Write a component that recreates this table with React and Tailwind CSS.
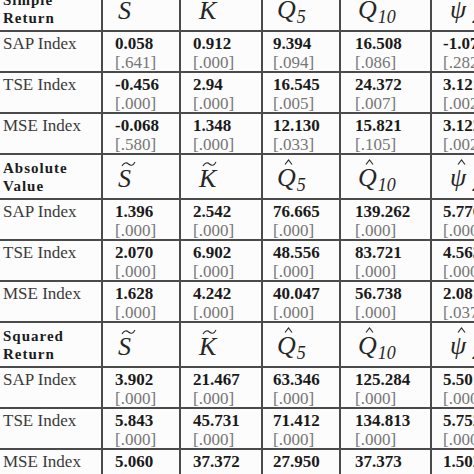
const SECTIONS = [
  {
    title: ['Simple', 'Return'],
    accents: [null, null, null, null, null],
    rows: [
      ['SAP Index', ['0.058', '.641'], ['0.912', '.000'], ['9.394', '.094'], ['16.508', '.086'], ['-1.074', '.282']],
      ['TSE Index', ['-0.456', '.000'], ['2.94', '.000'], ['16.545', '.005'], ['24.372', '.007'], ['3.121', '.002']],
      ['MSE Index', ['-0.068', '.580'], ['1.348', '.000'], ['12.130', '.033'], ['15.821', '.105'], ['3.122', '.002']],
    ],
  },
  {
    title: ['Absolute', 'Value'],
    accents: ['tilde', 'tilde', 'hat', 'hat', 'hat'],
    rows: [
      ['SAP Index', ['1.396', '.000'], ['2.542', '.000'], ['76.665', '.000'], ['139.262', '.000'], ['5.770', '.000']],
      ['TSE Index', ['2.070', '.000'], ['6.902', '.000'], ['48.556', '.000'], ['83.721', '.000'], ['4.563', '.000']],
      ['MSE Index', ['1.628', '.000'], ['4.242', '.000'], ['40.047', '.000'], ['56.738', '.000'], ['2.081', '.037']],
    ],
  },
  {
    title: ['Squared', 'Return'],
    accents: ['tilde', 'tilde', 'hat', 'hat', 'hat'],
    rows: [
      ['SAP Index', ['3.902', '.000'], ['21.467', '.000'], ['63.346', '.000'], ['125.284', '.000'], ['5.501', '.000']],
      ['TSE Index', ['5.843', '.000'], ['45.731', '.000'], ['71.412', '.000'], ['134.813', '.000'], ['5.752', '.000']],
      ['MSE Index', ['5.060', '.000'], ['37.372', '.000'], ['27.950', '.000'], ['37.373', '.000'], ['1.502', '.000']],
    ],
  },
];

const SYMBOLS = [
  { base: 'S' },
  { base: 'K' },
  { base: 'Q', sub: '5' },
  { base: 'Q', sub: '10' },
  { base: 'ψ', sub: '2', gap: true },
];

const NUM_PAD = ['pl-[12px]', 'pl-[12px]', 'pl-[10px]', 'pl-[14px]', 'pl-[11px]'];
const SYM_PAD = ['pl-[15px]', 'pl-[18px]', 'pl-[14px]', 'pl-[17px]', 'pl-[18px]'];

function Accent({ kind }) {
  if (kind === 'tilde') {
    return (
      <svg className="absolute top-[-3px] left-[3px] w-[15px] h-[6px]" viewBox="0 0 15 6" fill="none">
        <path d="M1 5 C3 1.5 5.5 1 7.5 3 S12 5 14 1" stroke="#2f2f2f" strokeWidth="1.1" />
      </svg>
    );
  }
  return (
    <svg className="absolute top-[-4px] left-[7px] w-[9px] h-[6px]" viewBox="0 0 9 6" fill="none">
      <path d="M1 5.5 L4.5 1 L8 5.5" stroke="#2f2f2f" strokeWidth="1.2" />
    </svg>
  );
}

function Symbol({ base, sub, gap, accent }) {
  return (
    <span className="inline-flex items-baseline italic text-[#262626] leading-[30px]">
      <span className="relative inline-block text-[26px]">
        {base}
        {accent && <Accent kind={accent} />}
      </span>
      {sub && (
        <span className={`text-[18px] relative top-[5px] ${gap ? 'ml-[6px]' : 'ml-[1px]'}`}>{sub}</span>
      )}
    </span>
  );
}

function HeaderRow({ title, accents }) {
  return (
    <>
      <div className="bg-[#fcfcfc] flex flex-col justify-center pl-[3px] text-[15px] leading-[18px] font-bold tracking-[1px] text-[#1c1c1c]">
        <span>{title[0]}</span>
        <span>{title[1]}</span>
      </div>
      {SYMBOLS.map((s, i) => (
        <div key={i} className={`bg-[#fcfcfc] flex items-center pt-[5px] ${SYM_PAD[i]}`}>
          <Symbol {...s} accent={accents[i]} />
        </div>
      ))}
    </>
  );
}

function DataRow({ row }) {
  const [label, ...cells] = row;
  return (
    <>
      <div className="bg-[#fcfcfc] pl-[3px] pt-[2px] text-[17px] leading-[19px] text-[#3a3a3a]">{label}</div>
      {cells.map(([value, p], i) => (
        <div key={i} className={`bg-[#fcfcfc] pt-[2px] text-[17px] leading-[19px] ${NUM_PAD[i]}`}>
          <div className="font-bold text-[#1a1a1a]">{value}</div>
          <div className="text-[#767676]">[{p}]</div>
        </div>
      ))}
    </>
  );
}

function Section({ sec }) {
  return (
    <>
      <HeaderRow title={sec.title} accents={sec.accents} />
      {sec.rows.map((r, ri) => (
        <DataRow key={ri} row={r} />
      ))}
    </>
  );
}

export default function App() {
  return (
    <div className="w-[474px] h-[474px] overflow-hidden bg-[#fcfcfc] font-['Liberation_Serif',serif]">
      <div className="-mt-[13px] w-[520px] grid grid-cols-[101px_76px_80px_76px_89px_88px] grid-rows-[43px_39px_39px_39px_43px_39px_39px_39px_43px_39px_39px_39px] gap-[2px] bg-[#4a4a4a]">
        {SECTIONS.map((sec, si) => (
          <Section key={si} sec={sec} />
        ))}
      </div>
    </div>
  );
}
